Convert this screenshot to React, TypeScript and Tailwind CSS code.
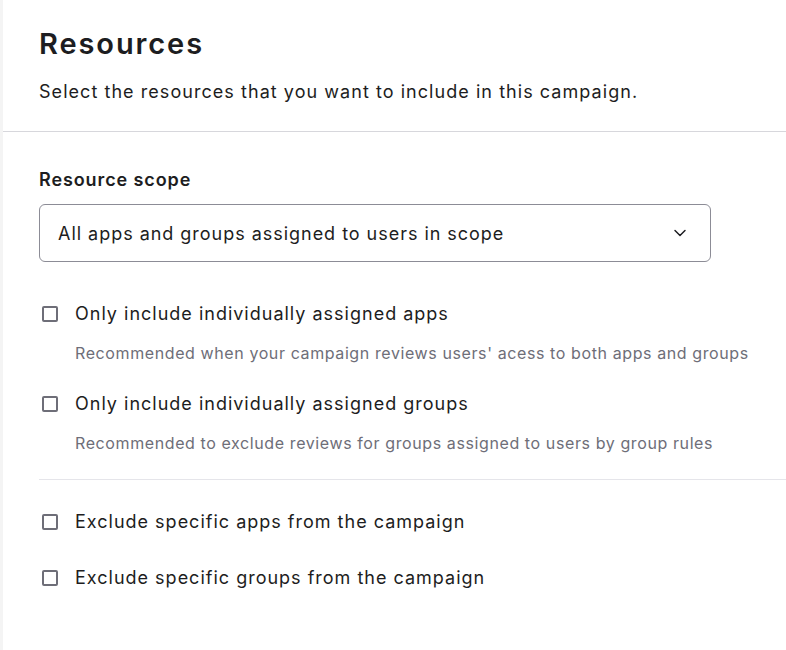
import { ChevronDown } from "lucide-react";

type Option = {
  label: string;
  hint?: string;
};

const includeOptions: Option[] = [
  {
    label: "Only include individually assigned apps",
    hint: "Recommended when your campaign reviews users' acess to both apps and groups",
  },
  {
    label: "Only include individually assigned groups",
    hint: "Recommended to exclude reviews for groups assigned to users by group rules",
  },
];

const excludeOptions: Option[] = [
  { label: "Exclude specific apps from the campaign" },
  { label: "Exclude specific groups from the campaign" },
];

function CheckRow({ option }: { option: Option }) {
  return (
    <label className="flex items-start gap-[17px]">
      <span className="mt-[5px] ml-[3px] h-4 w-4 shrink-0 rounded-[2px] border-2 border-[#6e6e78] bg-white" />
      <span className="min-w-0">
        <span className="block text-[18px] leading-[26px] tracking-[1px] text-[#1d1d21]">{option.label}</span>
        {option.hint ? (
          <span className="mt-[15px] block text-[16px] leading-[22px] tracking-[0.6px] text-[#6e6e78]">
            {option.hint}
          </span>
        ) : null}
      </span>
    </label>
  );
}

export default function App() {
  return (
    <div
      className="flex min-h-[650px] w-[786px] bg-white text-[#1d1d21]"
      style={{ fontFamily: "Inter, 'Noto Sans', sans-serif" }}
    >
      <div className="w-[3px] shrink-0 bg-[#f4f4f4]" />
      <div className="flex-1">
        <header className="border-b border-[#d7d7dc] pl-9 pt-[26px] pb-[26px]">
          <h1 className="text-[29px] font-semibold leading-[36px] tracking-[1.9px] text-[#1d1d21]">Resources</h1>
          <p className="mt-[17px] text-[18px] leading-[26px] tracking-[1.05px]">
            Select the resources that you want to include in this campaign.
          </p>
        </header>

        <section className="pl-9 pt-[35px]">
          <p className="text-[18px] font-semibold leading-[26px] tracking-[0.9px]">Resource scope</p>
          <div className="mt-[11px] flex h-[58px] w-[672px] items-center justify-between rounded-[6px] border border-[#8c8c96] pl-[18px] pr-[20px]">
            <span className="pt-[2px] text-[18px] leading-[26px] tracking-[0.97px]">
              All apps and groups assigned to users in scope
            </span>
            <ChevronDown className="h-5 w-5 text-[#1d1d21]" strokeWidth={1.75} />
          </div>

          <div className="mt-[39px] flex flex-col gap-[27px]">
            {includeOptions.map((o) => (
              <CheckRow key={o.label} option={o} />
            ))}
          </div>

          <div className="mt-[25px] border-t border-[#e5e5ea] pt-[29px]">
            <div className="flex flex-col gap-[30px]">
              {excludeOptions.map((o) => (
                <CheckRow key={o.label} option={o} />
              ))}
            </div>
          </div>
        </section>
      </div>
    </div>
  );
}
